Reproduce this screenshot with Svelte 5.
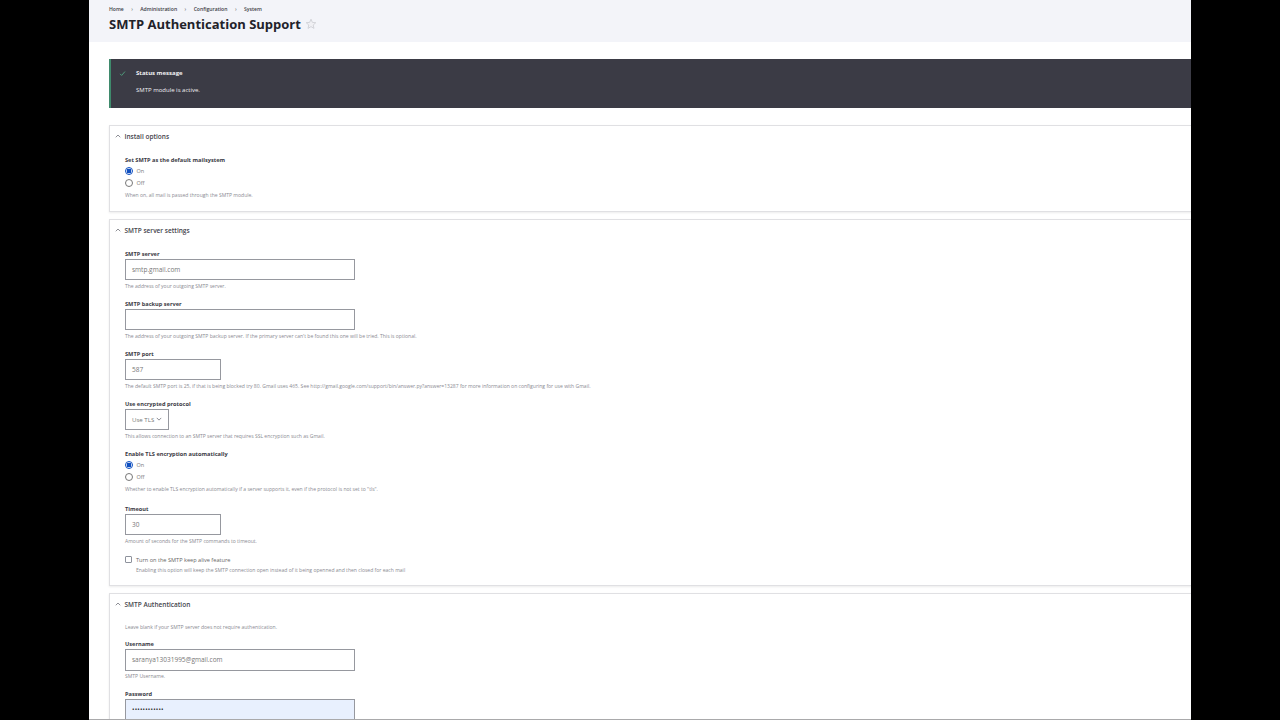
<script>
	const crumbs = ['Home', 'Administration', 'Configuration', 'System'];
</script>

{#snippet chevron()}
	<svg class="chevron" viewBox="0 0 8 5" aria-hidden="true">
		<path d="M1 4.2 4 1.2 7 4.2" fill="none" stroke="#55565f" stroke-width="0.9" />
	</svg>
{/snippet}

{#snippet radios(help)}
	<label class="radio"><span class="dot on"></span>On</label>
	<label class="radio"><span class="dot"></span>Off</label>
	<p class="help">{help}</p>
{/snippet}

<div class="page">
	<header class="top">
		<nav class="crumbs">
			{#each crumbs as crumb, i}
				{#if i > 0}<span class="sep">›</span>{/if}
				<span>{crumb}</span>
			{/each}
		</nav>
		<h1>
			SMTP Authentication Support
			<svg class="star" viewBox="0 0 12 12" aria-hidden="true">
				<path
					d="M6 1.2 7.4 4.4 10.8 4.7 8.2 7 9 10.4 6 8.6 3 10.4 3.8 7 1.2 4.7 4.6 4.4Z"
					fill="#f0f0f4"
					stroke="#cfd0d6"
					stroke-width="0.9"
				/>
			</svg>
		</h1>
	</header>

	<main class="content">
		<section class="status">
			<svg class="check" viewBox="0 0 8 8" aria-hidden="true">
				<path d="M1.2 4.4 3 6.2 6.8 1.8" fill="none" stroke="#4f9d7c" stroke-width="1.1" />
			</svg>
			<div>
				<h2>Status message</h2>
				<p>SMTP module is active.</p>
			</div>
		</section>

		<section class="card first">
			<h3>{@render chevron()}Install options</h3>
			<div class="body">
				<div class="label">Set SMTP as the default mailsystem</div>
				{@render radios('When on, all mail is passed through the SMTP module.')}
			</div>
		</section>

		<section class="card second">
			<h3>{@render chevron()}SMTP server settings</h3>
			<div class="body">
				<div class="item">
					<div class="label">SMTP server</div>
					<div class="input wide">smtp.gmail.com</div>
					<p class="help">The address of your outgoing SMTP server.</p>
				</div>
				<div class="item">
					<div class="label">SMTP backup server</div>
					<div class="input wide"></div>
					<p class="help">
						The address of your outgoing SMTP backup server. If the primary server can't be found this one will be tried. This is optional.
					</p>
				</div>
				<div class="item">
					<div class="label">SMTP port</div>
					<div class="input short">587</div>
					<p class="help">
						The default SMTP port is 25, if that is being blocked try 80. Gmail uses 465. See http://gmail.google.com/support/bin/answer.py?answer=13287 for more information on configuring for use with Gmail.
					</p>
				</div>
				<div class="item">
					<div class="label">Use encrypted protocol</div>
					<div class="input select">
						Use TLS
						<svg viewBox="0 0 8 5" aria-hidden="true">
							<path d="M1 1 4 4 7 1" fill="none" stroke="#55565f" stroke-width="0.9" />
						</svg>
					</div>
					<p class="help">This allows connection to an SMTP server that requires SSL encryption such as Gmail.</p>
				</div>
				<div class="item tls">
					<div class="label">Enable TLS encryption automatically</div>
					{@render radios('Whether to enable TLS encryption automatically if a server supports it, even if the protocol is not set to "tls".')}
				</div>
				<div class="item">
					<div class="label">Timeout</div>
					<div class="input short">30</div>
					<p class="help">Amount of seconds for the SMTP commands to timeout.</p>
				</div>
				<label class="keepalive"><span class="box"></span>Turn on the SMTP keep alive feature</label>
				<p class="help indent">
					Enabling this option will keep the SMTP connection open instead of it being openned and then closed for each mail
				</p>
			</div>
		</section>

		<section class="card third">
			<h3>{@render chevron()}SMTP Authentication</h3>
			<div class="body">
				<p class="help hint">Leave blank if your SMTP server does not require authentication.</p>
				<div class="item">
					<div class="label">Username</div>
					<div class="input wide">saranya13031995@gmail.com</div>
					<p class="help">SMTP Username.</p>
				</div>
				<div class="item">
					<div class="label">Password</div>
					<div class="input wide filled">••••••••••••</div>
				</div>
			</div>
		</section>
	</main>
</div>

<style>
	:global(body) {
		background: #000;
		overflow: hidden;
	}

	.page {
		width: 1102px;
		height: 720px;
		box-sizing: border-box;
		margin-left: 89px;
		border-bottom: 1px solid #a9a9ab;
		background: #fff;
		overflow: hidden;
		opacity: 0.999;
		font-family: 'Open Sans', 'Noto Sans', sans-serif;
		color: #55565b;
	}

	.top {
		height: 41.5px;
		padding: 6px 20px 0;
		box-sizing: border-box;
		background: #f3f4f9;
	}

	.crumbs {
		display: flex;
		gap: 7.4px;
		height: 7px;
		font-size: 5.1px;
		line-height: 7px;
		font-weight: 600;
		color: #3b3b45;
	}

	.sep {
		color: #777;
	}

	h1 {
		display: flex;
		align-items: center;
		gap: 4px;
		margin: 3px 0 0;
		font-size: 13px;
		line-height: 16px;
		font-weight: 700;
		color: #22222a;
	}

	.star {
		width: 12px;
		height: 12px;
	}

	.content {
		width: 1100px;
		padding: 17px 0 0 20px;
	}

	.status {
		display: flex;
		height: 49px;
		box-sizing: border-box;
		padding: 9px 0 0 8px;
		gap: 10px;
		border-left: 2px solid #3f8a6c;
		background: #3b3b45;
		color: #f0f0f2;
		font-size: 6px;
		line-height: 10px;
	}

	.check {
		width: 7px;
		height: 7px;
		margin-top: 2px;
	}

	.status h2 {
		margin: 0 0 7px;
		font-size: 6px;
		line-height: 10px;
		font-weight: 700;
	}

	.status p {
		margin: 0;
	}

	.card {
		border: 1px solid #e0e0e3;
		border-right: 0;
		box-shadow: 0 1px 2px rgba(0, 0, 0, 0.08);
		background: #fff;
	}

	.first {
		height: 87px;
		margin-top: 17px;
		box-sizing: border-box;
	}

	.second {
		height: 367px;
		margin-top: 7px;
		box-sizing: border-box;
	}

	.third {
		height: 140px;
		margin-top: 7px;
		box-sizing: border-box;
	}

	h3 {
		display: flex;
		align-items: center;
		gap: 3.5px;
		height: 21px;
		margin: 0;
		padding-left: 5px;
		font-size: 6.5px;
		font-weight: 600;
		color: #44444c;
	}

	.chevron {
		width: 6px;
		height: 4px;
	}

	.body {
		padding: 8px 0 0 15px;
	}

	.label {
		height: 10px;
		font-size: 5.65px;
		line-height: 10px;
		font-weight: 700;
		color: #3b3b45;
	}

	.item {
		margin-bottom: 8px;
	}

	.tls {
		margin-bottom: 10px;
	}

	.input {
		display: flex;
		align-items: center;
		height: 21px;
		box-sizing: border-box;
		padding-left: 6px;
		border: 1px solid #96989f;
		font-size: 6.5px;
		color: #777;
	}

	.third .input {
		height: 22px;
	}

	.third .help {
		margin-top: 1px;
	}

	.wide {
		width: 230px;
	}

	.short {
		width: 96px;
	}

	.select {
		gap: 2px;
		width: 44px;
		font-size: 6.1px;
	}

	.select svg {
		width: 6px;
		height: 4px;
	}

	.filled {
		background: #e8f0fe;
		color: #333;
		letter-spacing: 0.2px;
	}

	.help {
		height: 9px;
		margin: 2px 0 0;
		font-size: 5.05px;
		line-height: 9px;
		color: #8a8a92;
		white-space: nowrap;
	}

	.radio {
		display: flex;
		align-items: center;
		gap: 3.5px;
		height: 12px;
		font-size: 5.5px;
		color: #777;
	}

	.dot {
		width: 8px;
		height: 8px;
		box-sizing: border-box;
		border: 1px solid #777;
		border-radius: 50%;
	}

	.dot.on {
		border: 1px solid #0f4fc0;
		background: radial-gradient(circle, #0f4fc0 0 2.2px, #fff 2.6px);
	}

	.keepalive {
		display: flex;
		align-items: center;
		gap: 4px;
		height: 12px;
		margin-top: 8px;
		font-size: 5.6px;
		color: #666;
	}

	.box {
		width: 7px;
		height: 7px;
		box-sizing: border-box;
		border: 1px solid #8e929c;
		border-radius: 1px;
	}

	.indent {
		margin: 0 0 0 11px;
	}

	.third .hint {
		margin: 0 0 7px;
	}
</style>
